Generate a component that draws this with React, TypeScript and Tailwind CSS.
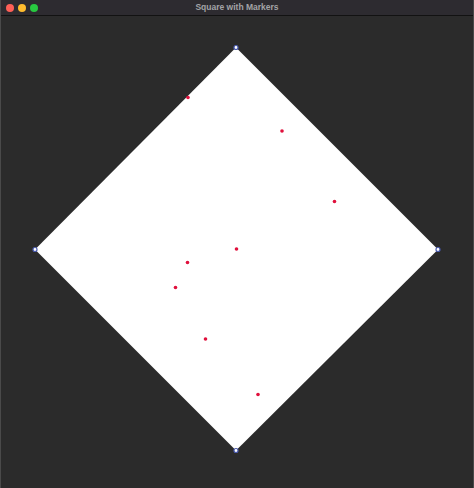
const corners = [
  { x: 236, y: 47 },
  { x: 438, y: 249 },
  { x: 236, y: 450 },
  { x: 35, y: 249 },
];

const markers = [
  { x: 188, y: 97 },
  { x: 282, y: 130.5 },
  { x: 334.5, y: 201 },
  { x: 236.5, y: 248.5 },
  { x: 187.5, y: 262 },
  { x: 175.5, y: 287 },
  { x: 205.5, y: 338.5 },
  { x: 258, y: 394 },
];

export default function App() {
  return (
    <div className="w-[474px] h-[488px] flex flex-col bg-[#2b2b2b] overflow-hidden border-x border-[#4a4a4a]">
      {/* Title bar */}
      <div className="relative h-[16px] shrink-0 flex items-center px-[5px] gap-[4px] bg-[#2d2b30] border-b border-[#121212]">
        <span className="w-[8px] h-[8px] rounded-full bg-[#fe5f57]" />
        <span className="w-[8px] h-[8px] rounded-full bg-[#febc2e]" />
        <span className="w-[8px] h-[8px] rounded-full bg-[#28c840]" />
        <div className="absolute inset-0 flex items-center justify-center text-[8.5px] font-bold text-[#a3a3a6] font-['Liberation_Sans',sans-serif]">
          Square with Markers
        </div>
      </div>

      {/* Canvas */}
      <svg className="flex-1 block" width="472" height="471" viewBox="1 16 472 471">
        <polygon
          points={corners.map((c) => `${c.x},${c.y}`).join(" ")}
          fill="#ffffff"
        />
        {corners.map((c, i) => (
          <circle key={i} cx={c.x} cy={c.y} r={2} fill="#ffffff" stroke="#4a5bb0" strokeWidth={1.2} />
        ))}
        {markers.map((m, i) => (
          <circle key={i} cx={m.x} cy={m.y} r={1.8} fill="#e0103c" />
        ))}
      </svg>
    </div>
  );
}
